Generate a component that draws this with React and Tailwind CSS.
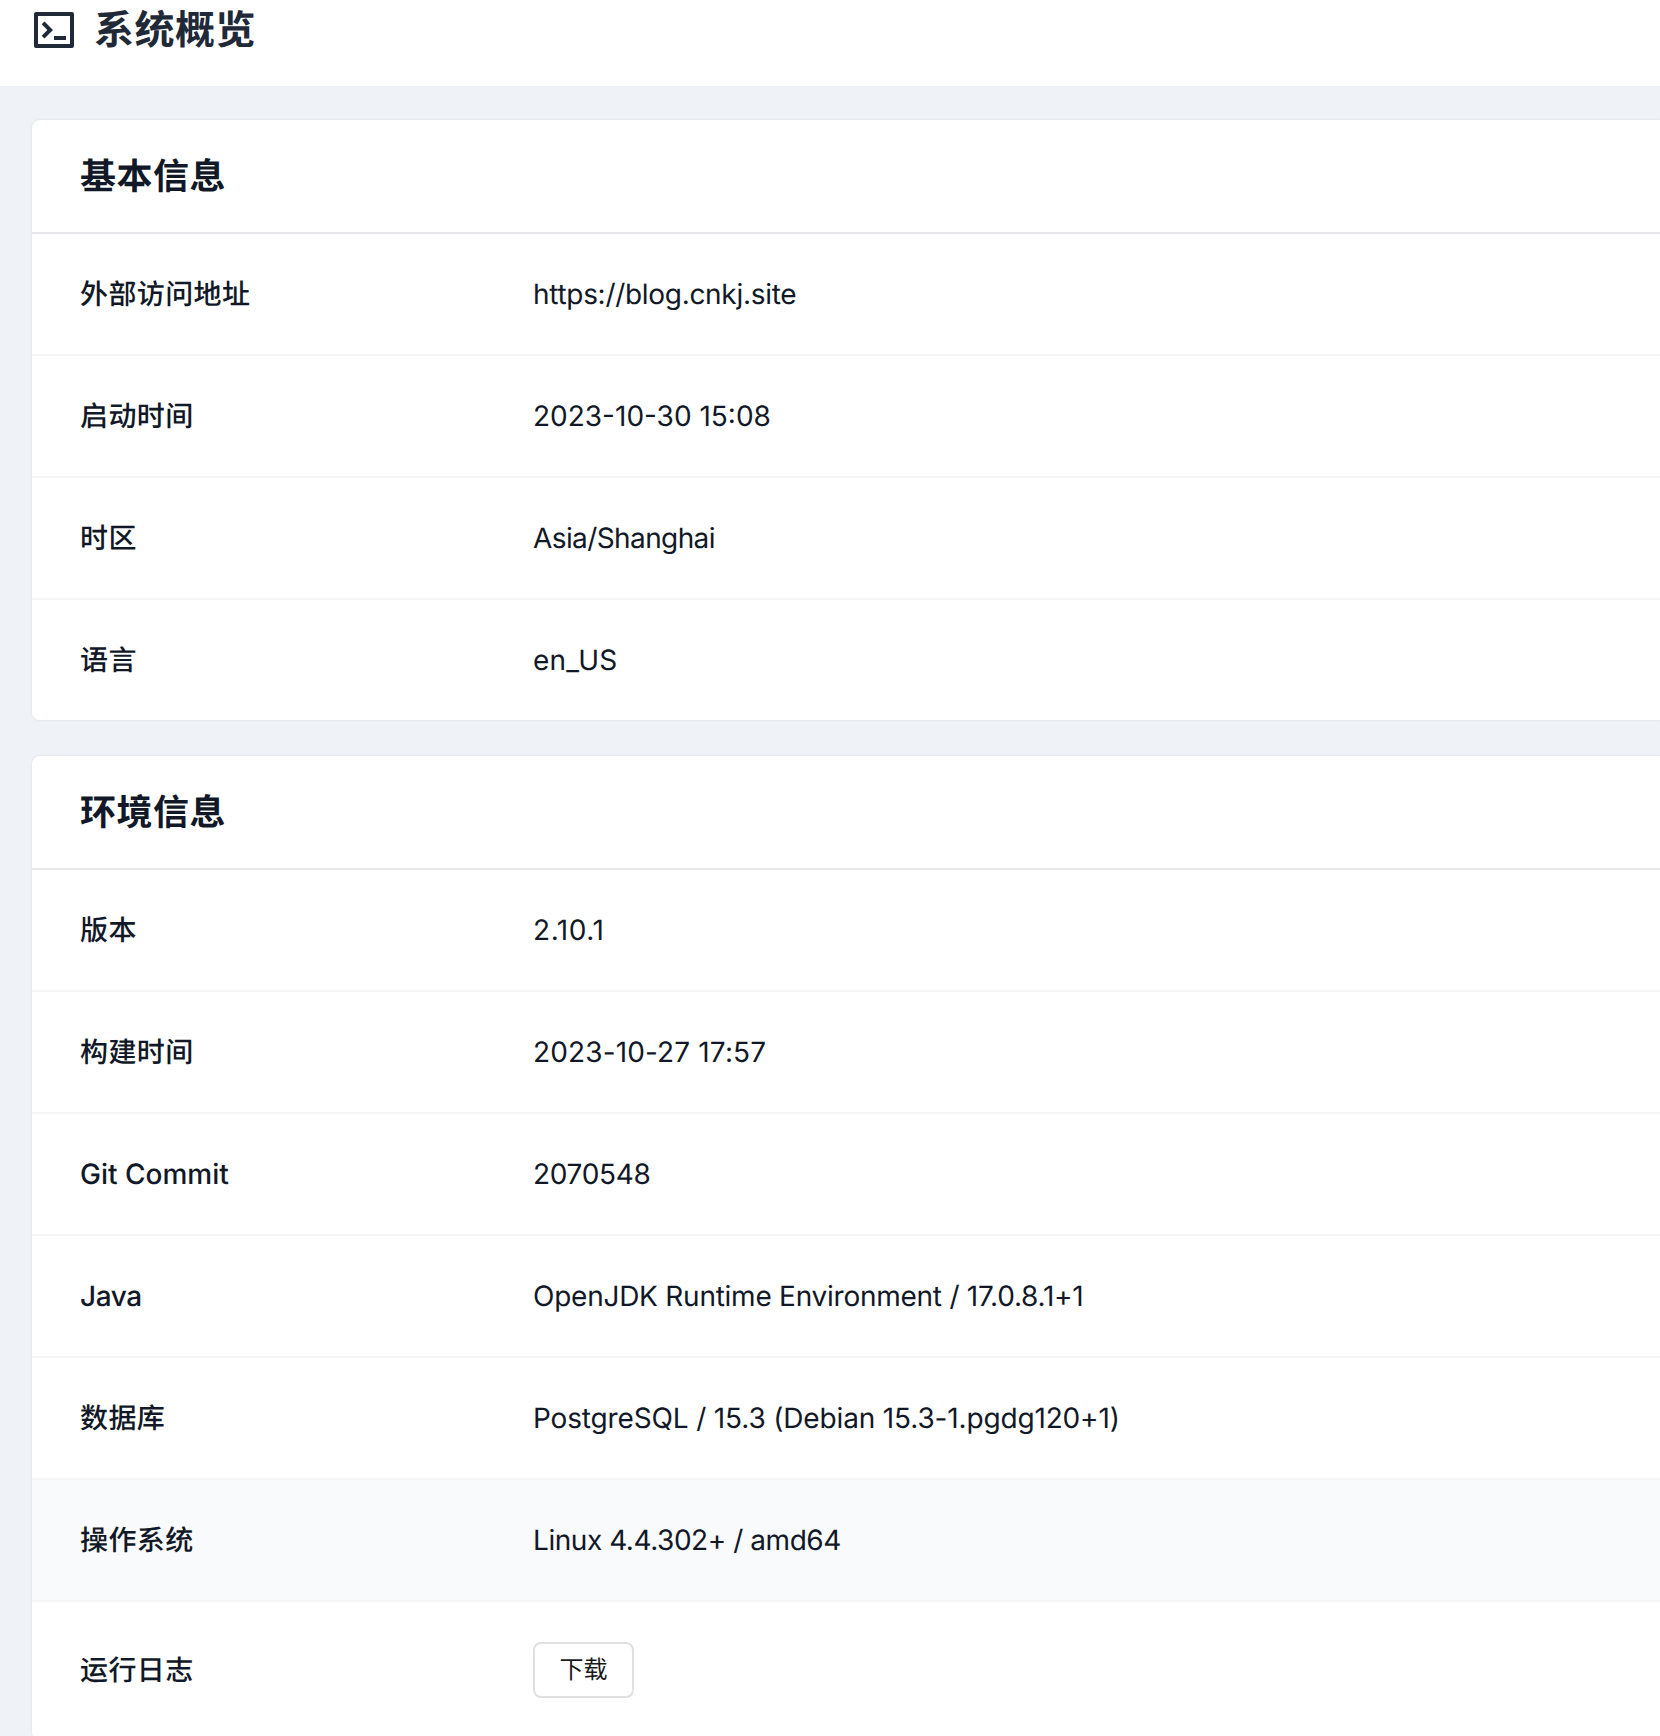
import React from "react";
import { RiTerminalBoxLine } from "react-icons/ri";

const font = "font-['Inter','Noto_Sans_CJK_SC',sans-serif] [text-rendering:geometricPrecision]";

function Row({ label, value, highlight, last, labelClass = "tracking-[0.4px]", valueClass = "", children }) {
  return (
    <div className={`flex items-center py-10 ${last ? "" : "border-b-2 border-[#f3f4f6]"} ${highlight ? "bg-[#f9fafb]" : "bg-white"}`}>
      <div className={`w-[501px] shrink-0 pl-12 text-[28px] leading-10 font-medium text-[#111827] ${labelClass}`}>{label}</div>
      <div className={`text-[28px] leading-10 text-[#111827] ${valueClass}`}>{children || value}</div>
    </div>
  );
}

function Card({ title, children }) {
  return (
    <section className="rounded-l-lg overflow-hidden bg-white shadow-[0_0_3px_rgba(15,23,42,0.10)]">
      <h2 className="h-[114px] flex items-center pl-12 text-4xl font-semibold tracking-[0.5px] text-[#111827] border-b-2 border-[#e5e7eb]">{title}</h2>
      {children}
    </section>
  );
}

export default function App() {
  return (
    <div className={`${font} w-[1660px] h-[1736px] overflow-hidden bg-[#eff2f6]`}>
      <header className="h-[86px] bg-white flex items-start pl-[30px] pt-[6px] gap-4">
        <RiTerminalBoxLine className="w-12 h-12 text-[#1f2937]" />
        <h1 className="text-[40px] leading-[48px] font-bold tracking-[0.5px] text-[#1f2937]">系统概览</h1>
      </header>
      <main className="pl-8 pt-[34px] flex flex-col gap-9">
        <Card title="基本信息">
          <Row label="外部访问地址" value="https://blog.cnkj.site" valueClass="tracking-[-0.3px]" />
          <Row label="启动时间" value="2023-10-30 15:08" />
          <Row label="时区" value="Asia/Shanghai" valueClass="tracking-[-0.6px]" />
          <Row label="语言" value="en_US" valueClass="tracking-[0.2px]" last />
        </Card>
        <Card title="环境信息">
          <Row label="版本" value="2.10.1" valueClass="tracking-[0.55px]" />
          <Row label="构建时间" value="2023-10-27 17:57" valueClass="tracking-[0.14px]" />
          <Row label="Git Commit" labelClass="tracking-normal" value="2070548" valueClass="tracking-[-0.3px]" />
          <Row label="Java" labelClass="tracking-[-0.4px]" value="OpenJDK Runtime Environment / 17.0.8.1+1" valueClass="tracking-[-0.25px]" />
          <Row label="数据库" value="PostgreSQL / 15.3 (Debian 15.3-1.pgdg120+1)" valueClass="tracking-[-0.15px]" />
          <Row label="操作系统" value="Linux 4.4.302+ / amd64" valueClass="tracking-[-0.45px]" highlight />
          <Row label="运行日志">
            <button className="w-[101px] h-14 flex items-center justify-center rounded-lg border-2 border-[#e0e0e0] bg-white text-2xl tracking-normal text-[#1a1a1a]">下载</button>
          </Row>
        </Card>
      </main>
    </div>
  );
}
